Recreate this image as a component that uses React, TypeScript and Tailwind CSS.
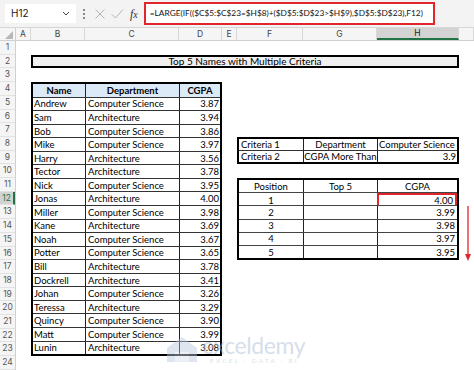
import React from "react";

const cellFont = "font-['Lato','Liberation_Sans',sans-serif]";

const students: [string, string, string][] = [
  ["Andrew", "Computer Science", "3.87"],
  ["Sam", "Architecture", "3.94"],
  ["Bob", "Computer Science", "3.86"],
  ["Mike", "Computer Science", "3.97"],
  ["Harry", "Architecture", "3.56"],
  ["Tector", "Architecture", "3.78"],
  ["Nick", "Computer Science", "3.95"],
  ["Jonas", "Architecture", "4.00"],
  ["Miller", "Computer Science", "3.98"],
  ["Kane", "Architecture", "3.69"],
  ["Noah", "Computer Science", "3.67"],
  ["Potter", "Computer Science", "3.65"],
  ["Bill", "Architecture", "3.78"],
  ["Dockrell", "Architecture", "3.41"],
  ["Johan", "Computer Science", "3.26"],
  ["Teressa", "Architecture", "3.29"],
  ["Quincy", "Computer Science", "3.90"],
  ["Matt", "Computer Science", "3.99"],
  ["Lunin", "Architecture", "3.08"],
];

const top5 = ["4.00", "3.99", "3.98", "3.97", "3.95"];

const columns = [
  { key: "A", w: "w-[15px]" },
  { key: "B", w: "w-[54px]" },
  { key: "C", w: "w-[94px]" },
  { key: "D", w: "w-[43px]" },
  { key: "E", w: "w-[15px]" },
  { key: "F", w: "w-[66px]" },
  { key: "G", w: "w-[74px]" },
  { key: "H", w: "w-[82px]" },
  { key: "", w: "flex-1" },
];

// every table row shares this so rows never grow past the sheet grid
const row = "flex-1 min-h-0 grid leading-[11px] overflow-hidden";

const FormulaBar = () => (
  <div className="h-[28px] flex items-center bg-[#f3f3f3] border-b border-[#d6d6d6] text-[#222]">
    <div className="ml-[5px] w-[71px] h-[19px] bg-white flex items-center justify-between px-[6px] font-['Inter',sans-serif] text-[10px]">
      <span>H12</span>
      <svg width="8" height="5" viewBox="0 0 8 5">
        <path d="M1 1l3 3 3-3" fill="none" stroke="#444" strokeWidth="1" />
      </svg>
    </div>
    <div className="w-[12px] flex flex-col items-center gap-[2px] ml-[2px]">
      <span className="w-[2px] h-[2px] bg-[#666] rounded-full" />
      <span className="w-[2px] h-[2px] bg-[#666] rounded-full" />
      <span className="w-[2px] h-[2px] bg-[#666] rounded-full" />
    </div>
    <svg width="12" height="12" viewBox="0 0 12 12" className="ml-[4px]">
      <path d="M1.5 1.5l9 9M10.5 1.5l-9 9" stroke="#b5b5b5" strokeWidth="1" />
    </svg>
    <svg width="13" height="12" viewBox="0 0 13 12" className="ml-[5px]">
      <path d="M1 6.5l3.5 3.5L12 1.5" fill="none" stroke="#b5b5b5" strokeWidth="1" />
    </svg>
    <span className="ml-[6px] font-['Liberation_Serif',serif] italic text-[12px] text-[#333] leading-none">
      f<span className="text-[10px]">x</span>
    </span>
    <div className="ml-[6px] w-[291px] h-[23px] border-2 border-[#e0262b] bg-white flex items-center pl-[4px] font-['Lato',sans-serif] text-[8.3px] text-[#111] whitespace-nowrap overflow-hidden">
      =LARGE(IF(($C$5:$C$23=$H$8)+($D$5:$D$23&gt;$H$9),$D$5:$D$23),F12)
    </div>
    <div className="flex-1" />
  </div>
);

const ColumnHeaders = () => (
  <div className="h-[13px] flex bg-[#f5f5f5] border-b border-[#d0d0d0] font-['Inter',sans-serif] text-[8.5px] text-[#444]">
    <div className="w-[16px] border-r border-[#d0d0d0] relative">
      <svg width="8" height="8" viewBox="0 0 8 8" className="absolute right-[2px] bottom-[1px]">
        <path d="M8 0V8H0Z" fill="#b8b8b8" />
      </svg>
    </div>
    {columns.map((c) => (
      <div
        key={c.key || "rest"}
        className={`${c.w} flex items-center justify-center border-r border-[#d8d8d8] ${
          c.key === "H" ? "bg-[#d3d3d3] border-b-2 border-b-[#217346] text-[#222]" : ""
        }`}
      >
        {c.key}
      </div>
    ))}
  </div>
);

const RowHeaders = () => (
  <div className="w-[16px] flex flex-col bg-[#f5f5f5] border-r border-[#d0d0d0] font-['Inter',sans-serif] text-[8.5px] text-[#555]">
    {Array.from({ length: 24 }, (_, i) => i + 1).map((n) => (
      <div
        key={n}
        className={`h-[13.71px] flex items-center justify-center border-b border-[#e2e2e2] ${
          n === 12 ? "bg-[#d3d3d3] text-[#217346] border-r-2 border-r-[#217346]" : ""
        }`}
      >
        {n}
      </div>
    ))}
  </div>
);

const StudentTable = () => (
  <div className={`col-start-2 col-span-3 row-start-4 row-span-20 min-h-0 border-2 border-black flex flex-col ${cellFont} text-[9.5px] text-black`}>
    <div className={`${row} grid-cols-[52px_94px_1fr] bg-[#dce9f6] font-bold`}>
      <div className="flex items-center justify-center">Name</div>
      <div className="flex items-center justify-center border-l border-[#222]">Department</div>
      <div className="flex items-center justify-center border-l border-[#222]">CGPA</div>
    </div>
    {students.map(([name, dept, cgpa]) => (
      <div key={name} className={`${row} grid-cols-[52px_94px_1fr] border-t border-[#333]`}>
        <div className="flex items-center pl-[1px]">{name}</div>
        <div className="flex items-center pl-[2px] border-l border-[#222]">{dept}</div>
        <div className="flex items-center justify-end pr-[1px] border-l border-[#222]">{cgpa}</div>
      </div>
    ))}
  </div>
);

const CriteriaTable = () => (
  <div className={`col-start-6 col-span-3 row-start-8 row-span-2 min-h-0 border-2 border-black flex flex-col ${cellFont} text-[9.5px] text-black`}>
    <div className={`${row} grid-cols-[64px_74px_1fr]`}>
      <div className="flex items-center pl-[2px]">Criteria 1</div>
      <div className="flex items-center justify-center border-l border-[#222]">Department</div>
      <div className="flex items-center pl-[1px] border-l border-[#222] whitespace-nowrap">Computer Science</div>
    </div>
    <div className={`${row} grid-cols-[64px_74px_1fr] border-t border-[#333]`}>
      <div className="flex items-center pl-[2px]">Criteria 2</div>
      <div className="flex items-center justify-center border-l border-[#222] whitespace-nowrap">CGPA More Than</div>
      <div className="flex items-center justify-end pr-[1px] border-l border-[#222]">3.9</div>
    </div>
  </div>
);

const TopTable = () => (
  <div className={`col-start-6 col-span-3 row-start-11 row-span-6 min-h-0 border-2 border-black flex flex-col ${cellFont} text-[9.5px] text-black`}>
    <div className={`${row} grid-cols-[64px_74px_1fr]`}>
      <div className="flex items-center justify-center">Position</div>
      <div className="flex items-center justify-center border-l border-[#222]">Top 5</div>
      <div className="flex items-center justify-center border-l border-[#222]">CGPA</div>
    </div>
    {top5.map((v, i) => (
      <div key={v} className={`${row} grid-cols-[64px_74px_1fr] border-t border-[#444]`}>
        <div className="flex items-center justify-center">{i + 1}</div>
        <div className="border-l border-[#222]" />
        <div
          className={`flex items-center justify-end pr-[2px] ${
            i === 0 ? "border-2 border-[#e0262b]" : "border-l border-[#222]"
          }`}
        >
          {v}
        </div>
      </div>
    ))}
  </div>
);

const Watermark = () => (
  <div className="absolute left-[164px] top-[334px] flex items-start opacity-45 pointer-events-none">
    <svg width="36" height="30" viewBox="0 0 36 30">
      <path d="M3 14L18 3l15 11v14H3Z" fill="#b9c7db" />
      <path d="M11 18h14v10H11Z" fill="#d6e0ec" />
    </svg>
    <div className="flex flex-col leading-none ml-[2px]">
      <span className="font-['Lato',sans-serif] text-[23px] text-[#a7b8d4] tracking-[-0.4px]">exceldemy</span>
      <span className="font-['Lato',sans-serif] text-[6.5px] text-[#b8bfca] tracking-[2.2px] mt-[1px] ml-[8px]">EXCEL · DATA · BI</span>
    </div>
  </div>
);

export default function App() {
  return (
    <div className="w-[474px] h-[370px] overflow-hidden bg-white relative">
      <FormulaBar />
      <ColumnHeaders />
      <div className="flex">
        <RowHeaders />
        <div className="flex-1 grid grid-cols-[15px_54px_94px_43px_15px_66px_74px_82px_1fr] grid-rows-[repeat(24,13.71px)]">
          <div className={`col-start-2 col-span-7 row-start-2 border-2 border-black bg-[#f0f0f0] flex items-center justify-center ${cellFont} text-[10px] leading-[11px] text-black`}>
            Top 5 Names with Multiple Criteria
          </div>
          <StudentTable />
          <CriteriaTable />
          <TopTable />
          <div className="col-start-9 row-start-12 row-span-5 flex justify-start pl-[6px] pt-[14px]">
            <svg width="6" height="56" viewBox="0 0 6 56">
              <path d="M3 0V50" stroke="#e0262b" strokeWidth="1.3" />
              <path d="M0 48h6l-3 7Z" fill="#e0262b" />
            </svg>
          </div>
        </div>
      </div>
      <Watermark />
    </div>
  );
}
